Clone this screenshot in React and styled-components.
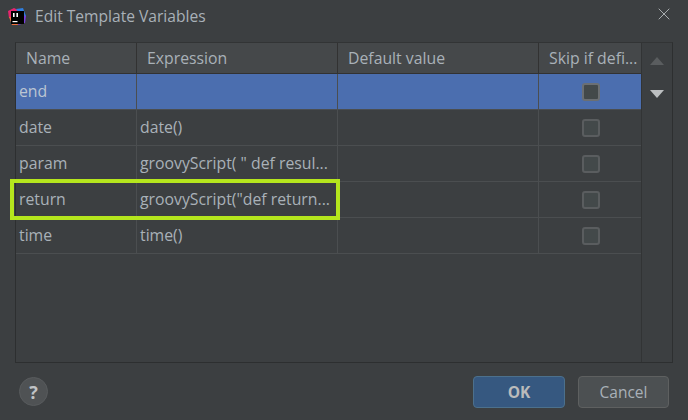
import React from "react";
import styled, { createGlobalStyle } from "styled-components";
import { X } from "lucide-react";

const Global = createGlobalStyle`
  html, body { margin: 0; padding: 0; background: #3c3f41; }
  * { box-sizing: border-box; }
`;

const rows = [
  { name: "end", expr: "", selected: true },
  { name: "date", expr: "date()" },
  { name: "param", expr: 'groovyScript( " def resul...' },
  { name: "return", expr: 'groovyScript("def return...', marked: true },
  { name: "time", expr: "time()" },
];

export default function App() {
  return (
    <Dialog>
      <Global />
      <TitleBar>
        <Logo viewBox="0 0 18 18">
          <path d="M0 3 L6 0 L10 2 L6 9 L1 10 Z" fill="#e6246e" />
          <path d="M8 1 L15 0 L18 8 L13 8 Z" fill="#2f7fe0" />
          <path d="M1 9 L4 17 L10 17 L8 9 Z" fill="#f0703a" />
          <path d="M13 7 L18 8 L17 15 L10 17 Z" fill="#7a3fe0" />
          <rect x="3" y="3" width="13" height="13" fill="#000" />
          <rect x="4.5" y="13" width="5" height="1.2" fill="#fff" />
          <rect x="5" y="5" width="1.6" height="4" fill="#fff" />
          <rect x="8.4" y="5" width="1.6" height="4" fill="#fff" />
        </Logo>
        <Title>Edit Template Variables</Title>
        <CloseIcon size={20} strokeWidth={1.1} />
      </TitleBar>
      <Body>
        <Frame>
          <Table>
            <HeaderRow>
              <HeadCell>Name</HeadCell>
              <HeadCell>Expression</HeadCell>
              <HeadCell>Default value</HeadCell>
              <HeadCell>Skip if defi...</HeadCell>
            </HeaderRow>
            {rows.map((r) => (
              <Row key={r.name} $selected={r.selected}>
                <Cell>{r.name}</Cell>
                <Cell>{r.expr}</Cell>
                <Cell />
                <CheckCell>
                  <Check $selected={r.selected} />
                </CheckCell>
              </Row>
            ))}
          </Table>
          <Side>
            <Arrow $up />
            <Arrow />
          </Side>
        </Frame>
        <Marker />
      </Body>
      <Footer>
        <Help>?</Help>
        <Buttons>
          <Button $primary>OK</Button>
          <Button>Cancel</Button>
        </Buttons>
      </Footer>
    </Dialog>
  );
}

const Dialog = styled.div`
  width: 688px;
  height: 420px;
  background: #3c3f41;
  color: #a9b1b8;
  font-family: "Open Sans", "Noto Sans", sans-serif;
  font-size: 15.8px;
  overflow: hidden;
`;

const TitleBar = styled.div`
  height: 42px;
  display: flex;
  align-items: center;
  padding: 0 14px 8px 8px;
`;

const Logo = styled.svg`
  width: 18px;
  height: 18px;
  flex: none;
`;

const Title = styled.div`
  margin-left: 9px;
  margin-bottom: 2px;
  flex: 1;
  font-size: 15.6px;
`;

const CloseIcon = styled(X)`
  color: #b4b8ba;
  flex: none;
  margin-bottom: 6px;
`;

const Body = styled.div`
  position: relative;
  height: 321px;
  padding: 0 15px;
`;

const Frame = styled.div`
  height: 321px;
  display: flex;
  border: 1px solid #2d2f30;
  border-top-color: #323435;
`;

const Table = styled.div`
  width: 625px;
  flex: none;
  display: flex;
  flex-direction: column;
`;

const Columns = styled.div`
  display: grid;
  grid-template-columns: 121px 201px 201px 102px;
`;

const HeaderRow = styled(Columns)`
  height: 31px;
  background: #45484a;
  border-bottom: 1px solid #323232;
`;

const HeadCell = styled.div`
  padding-left: 10px;
  line-height: 31px;
  white-space: nowrap;
  overflow: hidden;
  border-right: 1px solid #323232;
  &:last-child { border-right: none; }
`;

const Row = styled(Columns)`
  height: 36px;
  border-bottom: 1px solid #4b4e50;
  background: ${(p) => (p.$selected ? "#4b6eaf" : "transparent")};
  color: ${(p) => (p.$selected ? "#bbc5d2" : "#a9b1b8")};
`;

const Cell = styled.div`
  padding-left: 3px;
  line-height: 35px;
  white-space: nowrap;
  overflow: hidden;
  border-right: 1px solid #4b4e50;
`;

const CheckCell = styled.div`
  display: flex;
  align-items: center;
  justify-content: center;
`;

const Check = styled.div`
  width: 18px;
  height: 18px;
  margin-left: 1px;
  border-radius: 3px;
  background: #43494a;
  border: 2px solid ${(p) => (p.$selected ? "#6b6f73" : "#5a5d5f")};
`;

const Side = styled.div`
  flex: 1;
  border-left: 1px solid #323435;
  display: flex;
  flex-direction: column;
  align-items: center;
  padding-top: 14px;
  gap: 25px;
`;

const Arrow = styled.div`
  width: 0;
  height: 0;
  border-left: 7.5px solid transparent;
  border-right: 7.5px solid transparent;
  ${(p) =>
    p.$up
      ? "border-bottom: 8px solid #5a5d5f;"
      : "border-top: 8px solid #bcbfc1;"}
`;

const Marker = styled.div`
  position: absolute;
  left: 10px;
  top: 137px;
  width: 330px;
  height: 41px;
  border: 4px solid #b5e61d;
  pointer-events: none;
`;

const Footer = styled.div`
  height: 57px;
  display: flex;
  align-items: center;
  justify-content: space-between;
  padding: 0 19px;
`;

const Help = styled.div`
  width: 29px;
  height: 29px;
  border-radius: 50%;
  background: #4f5254;
  border: 1px solid #585b5d;
  color: #c0c3c5;
  font-weight: 700;
  font-size: 18px;
  display: flex;
  align-items: center;
  justify-content: center;
`;

const Buttons = styled.div`
  display: flex;
  gap: 13px;
`;

const Button = styled.div`
  width: ${(p) => (p.$primary ? "92px" : "91px")};
  height: 32px;
  border-radius: 4px;
  display: flex;
  align-items: center;
  justify-content: center;
  font-size: 15.5px;
  font-weight: ${(p) => (p.$primary ? 700 : 400)};
  background: ${(p) => (p.$primary ? "#365880" : "#4c5052")};
  border: 1px solid ${(p) => (p.$primary ? "#4c708c" : "#5e6060")};
  color: ${(p) => (p.$primary ? "#bbbbbb" : "#a9b1b8")};
`;
